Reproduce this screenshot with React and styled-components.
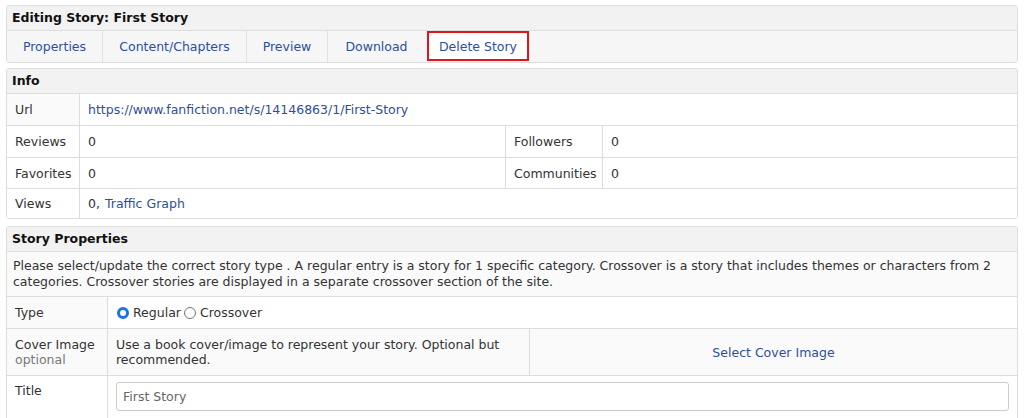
import React from 'react';
import styled, { createGlobalStyle } from 'styled-components';

const Global = createGlobalStyle`
    body {
        margin: 0;
        padding: 5px 6px 0 6px;
        background: #fff;
        font-family: 'DejaVu Sans', Verdana, sans-serif;
        font-size: 12.5px;
        color: #333;
    }
`;

const Panel = styled.div`
    border: 1px solid #ddd;
    border-radius: 3px;
    margin-bottom: ${props => props.gap || 5}px;
    overflow: hidden;
`;

const PanelHead = styled.div`
    background: #f2f2f2;
    border-bottom: 1px solid #ddd;
    font-weight: bold;
    color: #111;
    height: 24px;
    line-height: 24px;
    padding: 0 5px;
`;

const Tabs = styled.div`
    display: flex;
    background: #f6f6f6;
    height: 31px;
`;

const Tab = styled.a`
    display: flex;
    align-items: center;
    justify-content: center;
    width: ${props => props.w}px;
    box-sizing: border-box;
    border-right: 1px solid #e2e2e2;
    color: #2e4f98;
    text-decoration: none;
    ${props => props.active && `
        border: 2px solid #e0161b;
        background: #fff;
        margin-left: 2px;
        height: 30px;
    `}
`;

const Row = styled.div`
    display: grid;
    grid-template-columns: ${props => props.cols};
    border-bottom: 1px solid #ddd;
    min-height: ${props => props.h || 31}px;
    &:last-child { border-bottom: 0; }
`;

const Cell = styled.div`
    display: flex;
    align-items: ${props => props.top ? 'flex-start' : 'center'};
    justify-content: ${props => props.center ? 'center' : 'flex-start'};
    padding: ${props => props.top ? '7px' : '0'} 8px 0 8px;
    border-left: ${props => props.first ? '0' : '1px solid #ddd'};
    background: ${props => props.label ? '#fafafa' : '#fff'};
    line-height: 15px;
`;

const Link = styled.a`
    color: #2e4f98;
    text-decoration: none;
    margin-left: ${props => props.ml || 0}px;
`;

const Desc = styled.div`
    padding: 6px 6px;
    border-bottom: 1px solid #ddd;
    line-height: 16px;
    background: #fafafa;
`;

const Muted = styled.div`
    color: #777;
`;

const Radio = styled.span`
    display: inline-block;
    width: 12px;
    height: 12px;
    border-radius: 50%;
    box-sizing: border-box;
    border: ${props => props.on ? '3px solid #1a73e8' : '1px solid #767676'};
    margin: 0 4px 0 1px;
    vertical-align: -1px;
`;

const Input = styled.div`
    flex: 1;
    height: 27px;
    border: 1px solid #ccc;
    border-radius: 3px;
    color: #666;
    display: flex;
    align-items: center;
    padding-left: 6px;
    margin-top: -1px;
`;

const infoCols = '72px 426px 97px 1fr';

export default function App() {
    return (
        <>
            <Global />
            <Panel>
                <PanelHead>Editing Story: First Story</PanelHead>
                <Tabs>
                    <Tab w={96}>Properties</Tab>
                    <Tab w={144}>Content/Chapters</Tab>
                    <Tab w={81}>Preview</Tab>
                    <Tab w={97} style={{ borderRight: 0 }}>Download</Tab>
                    <Tab w={102} active>Delete Story</Tab>
                </Tabs>
            </Panel>
            <Panel gap={7}>
                <PanelHead>Info</PanelHead>
                <Row cols="72px 1fr" h={31}>
                    <Cell first label>Url</Cell>
                    <Cell><Link>https://www.fanfiction.net/s/14146863/1/First-Story</Link></Cell>
                </Row>
                <Row cols={infoCols}>
                    <Cell first>Reviews</Cell><Cell>0</Cell>
                    <Cell>Followers</Cell><Cell>0</Cell>
                </Row>
                <Row cols={infoCols} h={30}>
                    <Cell first>Favorites</Cell><Cell>0</Cell>
                    <Cell>Communities</Cell><Cell>0</Cell>
                </Row>
                <Row cols="72px 1fr" h={29}>
                    <Cell first>Views</Cell>
                    <Cell>0,<Link ml={5}>Traffic Graph</Link></Cell>
                </Row>
            </Panel>
            <Panel gap={0}>
                <PanelHead>Story Properties</PanelHead>
                <Desc>
                    Please select/update the correct story type . A regular entry is a story for 1 specific category. Crossover is a story that includes themes or characters from 2 categories. Crossover stories are displayed in a separate crossover section of the site.
                </Desc>
                <Row cols="100px 1fr">
                    <Cell first label>Type</Cell>
                    <Cell><Radio on />Regular<Radio style={{ marginLeft: 3 }} />Crossover</Cell>
                </Row>
                <Row cols="100px 422px 1fr" h={46}>
                    <Cell first label><div>Cover Image<Muted>optional</Muted></div></Cell>
                    <Cell label>Use a book cover/image to represent your story. Optional but recommended.</Cell>
                    <Cell label center><Link>Select Cover Image</Link></Cell>
                </Row>
                <Row cols="100px 1fr" h={44}>
                    <Cell first top>Title</Cell>
                    <Cell top><Input>First Story</Input></Cell>
                </Row>
            </Panel>
        </>
    );
}
